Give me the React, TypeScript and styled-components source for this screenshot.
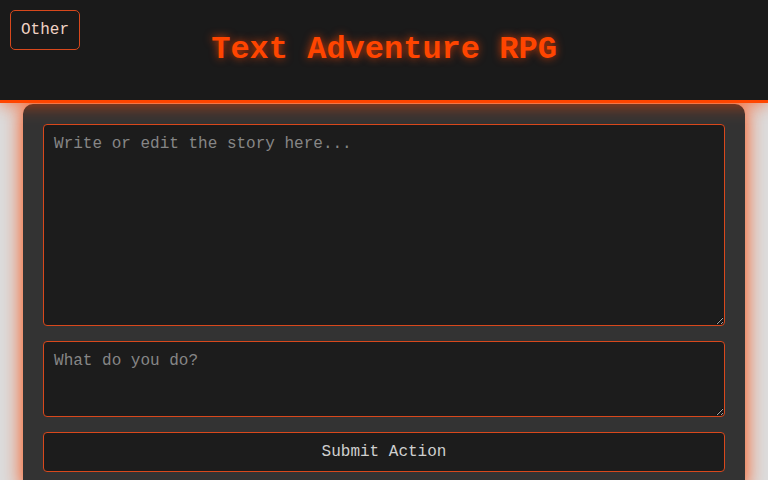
import React from 'react';
import styled, { createGlobalStyle } from 'styled-components';

const GlobalStyle = createGlobalStyle`
  html, body {
    margin: 0;
    padding: 0;
    background: #dcdcdc;
    font-family: 'Liberation Mono', 'Courier New', monospace;
  }
  * {
    box-sizing: border-box;
  }
`;

const Header = styled.header`
  position: relative;
  z-index: 2;
  height: 103px;
  padding: 10px;
  display: grid;
  grid-template-columns: 1fr auto 1fr;
  align-items: start;
  background: #1a1a1a;
  border-bottom: 3px solid #ff4500;
  box-shadow: 0 0 18px rgba(255, 69, 0, 0.75);
`;

const MenuButton = styled.button`
  justify-self: start;
  height: 40px;
  padding: 0 10px;
  background: transparent;
  color: #f0d2c4;
  border: 1px solid #d8481c;
  border-radius: 5px;
  font-family: inherit;
  font-size: 16px;
  cursor: pointer;
`;

const Title = styled.h1`
  margin: 21px 0 0;
  font-size: 32px;
  font-weight: bold;
  line-height: 37px;
  color: #ff4500;
  text-shadow: 0 0 8px rgba(255, 69, 0, 0.8);
`;

const Panel = styled.main`
  width: 94%;
  margin: 1px auto 0;
  padding: 20px;
  display: flex;
  flex-direction: column;
  gap: 15px;
  background: #333;
  border-radius: 10px;
  box-shadow: 0 0 20px #ff4500;
`;

const Field = styled.textarea<{ $rows: number }>`
  display: block;
  width: 100%;
  height: ${p => p.$rows}px;
  padding: 10px;
  background: #1c1c1c;
  color: #ddd;
  border: 1px solid #d8481c;
  border-radius: 4px;
  font-family: inherit;
  font-size: 16px;
  line-height: 19px;
  resize: vertical;
  outline: none;

  &::placeholder {
    color: #868686;
  }
`;

const SubmitButton = styled.button`
  height: 40px;
  background: #1c1c1c;
  color: #cfcfcf;
  border: 1px solid #d8481c;
  border-radius: 4px;
  font-family: inherit;
  font-size: 16px;
  cursor: pointer;
`;

export default function App() {
  return (
    <>
      <GlobalStyle />
      <Header>
        <MenuButton>Other</MenuButton>
        <Title>Text Adventure RPG</Title>
      </Header>
      <Panel>
        <Field $rows={202} placeholder="Write or edit the story here..." />
        <Field $rows={76} placeholder="What do you do?" />
        <SubmitButton>Submit Action</SubmitButton>
      </Panel>
    </>
  );
}
